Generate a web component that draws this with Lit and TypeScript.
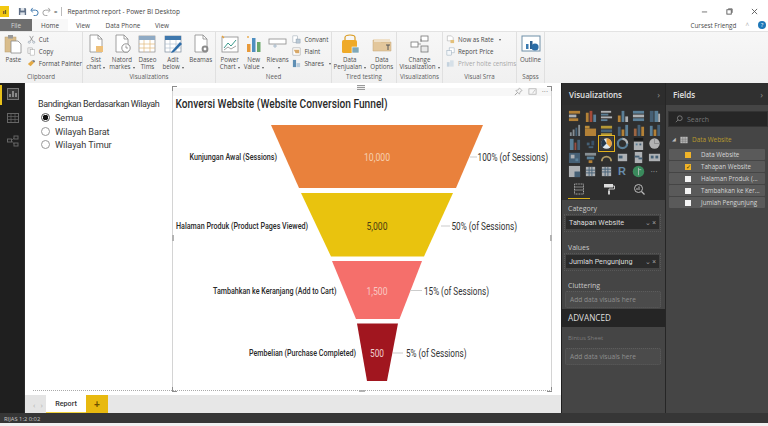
import { LitElement, html, css, svg } from "lit";
import { customElement } from "lit/decorators.js";

const doc = (extra: unknown) => svg`<path d="M4 1h8l4 4v13H4z" fill="#fff" stroke="#8b8b8b" stroke-width=".8"/><path d="M12 1v4h4" fill="none" stroke="#8b8b8b" stroke-width=".8"/>${extra}`;
const ic = (body: unknown, size = 20) => html`<svg class="ic" width=${size} height=${size} viewBox="0 0 20 20">${body}</svg>`;

const icons: Record<string, unknown> = {
  paste: svg`<rect x="2" y="3" width="11" height="15" fill="#d9bd8c" stroke="#b89c6c" stroke-width=".5"/><rect x="5" y="1" width="5" height="3.5" fill="#9a9a9a"/><path d="M8 7h7l3 3v9H8z" fill="#fff" stroke="#8b8b8b" stroke-width=".8"/>`,
  sist: doc(svg`<rect x="10" y="12" width="7" height="6" fill="#eec07a"/>`),
  nat: doc(svg`<circle cx="14" cy="14" r="4.2" fill="#fff" stroke="#777" stroke-width=".8"/><path d="M14 11.5V14h2" fill="none" stroke="#777" stroke-width=".7"/>`),
  table: svg`<rect x="2" y="2" width="16" height="16" fill="#fff" stroke="#8b8b8b" stroke-width=".7"/><rect x="2" y="2" width="16" height="4" fill="#8faac4"/><path d="M2 10h16M2 14h16M7 6v12M13 6v12" stroke="#e3b778" stroke-width=".7"/>`,
  adit: svg`<rect x="2" y="2" width="16" height="16" fill="#fff" stroke="#7b8b9b" stroke-width=".7"/><rect x="2" y="2" width="16" height="4" fill="#3f78ad"/><path d="M2 10h16M2 14h16M7 6v12M13 6v12" stroke="#a9b9c9" stroke-width=".6"/><path d="M9 17l8-9 2 2-8 8-3 1z" fill="#2c6ca8"/>`,
  beam: doc(svg`<circle cx="14" cy="15" r="3.4" fill="#8a8a8a"/><circle cx="14" cy="15" r="1.4" fill="#fff"/>`),
  power: svg`<rect x="2" y="3" width="16" height="15" fill="#fff" stroke="#8b8b8b" stroke-width=".8"/><path d="M4 14l4-5 3 3 5-6" fill="none" stroke="#3b9a8c" stroke-width="1"/><path d="M4 16l4-3 3 2 5-3" fill="none" stroke="#7b7b7b" stroke-width=".7"/><path d="M2 2l2 2" stroke="#e8a23a" stroke-width="1.2"/>`,
  newv: svg`<rect x="3" y="10" width="3.5" height="8" fill="#e89a3a"/><rect x="8" y="4" width="3.5" height="14" fill="#4f8fc0"/><rect x="13" y="8" width="3.5" height="10" fill="#6aa86a"/><path d="M3 3h2M4 2v2" stroke="#e8a23a" stroke-width=".8"/>`,
  riev: svg`<rect x="1" y="5" width="17" height="5" fill="#fff" stroke="#8b8b8b" stroke-width=".8"/><path d="M7 10v4M5 12h4" stroke="#9bb0c4" stroke-width=".8"/>`,
  bag: svg`<path d="M5 6V3.5C5 2 7 1 10 1s5 1 5 2.5V6" fill="none" stroke="#d99a1e" stroke-width="1.2"/><rect x="2" y="6" width="15" height="13" rx="1.5" fill="#efaa28"/><rect x="12" y="13" width="7" height="6" fill="#7fa8b8" stroke="#fff" stroke-width=".6"/>`,
  folder: svg`<path d="M1 6h6l2 2h10v9H1z" fill="#e3c79c" stroke="#c4a577" stroke-width=".5"/><rect x="2" y="5" width="16" height="3" fill="#efe0c8"/><path d="M14 11h4M16 11v5" stroke="#555" stroke-width="1"/>`,
  change: svg`<rect x="1" y="8" width="7" height="5" fill="#fff" stroke="#777" stroke-width=".8"/><rect x="11" y="2" width="7" height="5" fill="#fff" stroke="#777" stroke-width=".8"/><rect x="11" y="12" width="7" height="6" fill="#e9e9e9" stroke="#777" stroke-width=".8"/><path d="M8 10h3M11 5v3" stroke="#777" stroke-width=".7" fill="none"/>`,
  outline: svg`<rect x="1" y="2" width="18" height="15" fill="#fff" stroke="#6f8fa8" stroke-width="1"/><rect x="5" y="10" width="2.5" height="5" fill="#3a7ab0"/><rect x="9" y="7" width="2.5" height="8" fill="#2a5f90"/><circle cx="14" cy="13" r="3.6" fill="#2a6ca6"/>`,
};

const mini: Record<string, unknown> = {
  cut: svg`<path d="M6 2l7 12M14 2L7 14" stroke="#777" stroke-width="1.4"/><circle cx="5" cy="16" r="2.4" fill="none" stroke="#8a9aa8" stroke-width="1.3"/><circle cx="15" cy="16" r="2.4" fill="none" stroke="#8a9aa8" stroke-width="1.3"/>`,
  copy: svg`<rect x="2" y="2" width="10" height="12" fill="#eee" stroke="#999"/><rect x="7" y="6" width="10" height="12" fill="#fff" stroke="#999"/>`,
  fmt: svg`<path d="M2 11l8-7 6 4-8 8z" fill="#e3a945"/><path d="M10 4l6-2 2 4-2 2z" fill="#777"/>`,
  conv: svg`<rect x="2" y="2" width="10" height="14" fill="#fff" stroke="#8b9aa8"/><rect x="9" y="9" width="9" height="9" fill="#b9c9d6" stroke="#8b9aa8"/>`,
  flaint: svg`<rect x="2" y="2" width="16" height="16" fill="#fff" stroke="#8b8b8b"/><path d="M4 6h12v8H8z" fill="#d8a868"/>`,
  shares: svg`<rect x="2" y="2" width="7" height="16" fill="#5f8fb4"/><rect x="10" y="9" width="8" height="9" fill="#b8ccdc"/>`,
  rate: svg`<path d="M3 2h9l4 4v7H3z" fill="#fff" stroke="#999"/><rect x="10" y="11" width="8" height="7" fill="#e3c07a"/>`,
  price: svg`<rect x="7" y="2" width="11" height="11" fill="#fff" stroke="#8ba0b3"/><rect x="2" y="8" width="10" height="10" fill="#f4f7fa" stroke="#8ba0b3"/>`,
  hole: svg`<rect x="2" y="7" width="6" height="10" fill="#c4d2de"/><rect x="9" y="3" width="8" height="14" fill="#d6e0e8"/>`,
};

const miniIcon = (k: string) => html`<svg class="mi" width="9" height="9" viewBox="0 0 20 20">${mini[k]}</svg>`;

const big = (icon: string, l1: string, l2 = "", w = 26, caret = false) => html`
  <div class="big" style="width:${w}px">
    ${ic(icons[icon])}
    <span class="bl">${l1}</span>
    <span class="bl">${l2}${caret ? html`<i class="car"></i>` : ""}</span>
  </div>`;

const small = (icon: string, t: string, caret = false, muted = false) => html`
  <div class="small ${muted ? "muted" : ""}">${miniIcon(icon)}<span>${t}</span>${caret ? html`<i class="car"></i>` : ""}</div>`;

type R = [number, number, number, number, string];
const O = "#e7a13b", B = "#6d9fc0", G = "#a9b4bc", W = "#dfe4e8", D = "#4f7391", Y = "#e8c13a";
const cells: R[][] = [
  [[1, 2, 12, 3, O], [1, 6, 8, 3, W], [1, 10, 10, 3, O]],
  [[2, 4, 3, 10, O], [6, 2, 3, 12, "#d0553c"], [10, 6, 3, 8, B]],
  [[1, 2, 11, 2, W], [1, 5, 8, 2, B], [1, 8, 12, 2, W], [1, 11, 7, 2, B]],
  [[2, 7, 3, 7, O], [6, 2, 3, 12, B], [10, 8, 3, 6, W]],
  [[1, 2, 12, 3, B], [1, 6, 12, 3, W], [1, 10, 12, 3, B]],
  [[2, 2, 4, 12, D], [7, 2, 4, 12, B], [11, 5, 2, 9, W]],
  [[2, 10, 2, 4, G], [5, 7, 2, 7, G], [8, 5, 2, 9, D], [11, 2, 2, 12, G]],
  [[1, 3, 5, 3, "#f0b040"], [1, 6, 12, 8, O]],
  [[1, 3, 12, 3, Y], [1, 7, 12, 3, D], [1, 11, 12, 3, Y]],
  [[2, 4, 3, 10, D], [6, 7, 3, 7, O], [10, 2, 3, 12, B]],
  [[2, 6, 3, 8, "#c87a4a"], [6, 2, 3, 12, D], [10, 4, 3, 10, O]],
  [[2, 3, 3, 11, B], [6, 7, 3, 7, O], [10, 2, 3, 12, D]],
  [[2, 2, 4, 12, B], [7, 6, 2, 8, "#c05a4a"], [10, 3, 3, 11, D]],
  [[3, 6, 3, 3, D], [8, 4, 3, 5, "#3f5f7f"], [5, 10, 5, 2, D]],
  [],
  [],
  [[2, 1, 10, 3, "#111"], [2, 5, 10, 9, W], [4, 7, 2, 2, B], [8, 7, 2, 2, D]],
  [],
  [[1, 2, 12, 11, D], [3, 4, 4, 4, W], [8, 8, 3, 3, B]],
  [[1, 2, 12, 3, G], [3, 6, 8, 3, B], [5, 10, 4, 3, O]],
  [],
  [[2, 3, 10, 8, W], [3, 5, 4, 3, D]],
  [[3, 1, 8, 12, W], [3, 5, 5, 2, D], [7, 7, 4, 2, D]],
  [[1, 3, 12, 8, W], [3, 5, 3, 3, D], [8, 5, 3, 3, D]],
  [[1, 1, 12, 12, W], [7, 7, 6, 6, D]],
  [[2, 2, 10, 10, W], [2, 5, 10, 1, D], [2, 8, 10, 1, D], [5, 2, 1, 10, D], [8, 2, 1, 10, D]],
  [[2, 2, 10, 10, W], [2, 4, 10, 1, D], [2, 7, 10, 1, D], [5, 2, 1, 10, D], [8, 2, 1, 10, D]],
  [],
  [],
  [],
];
const special: Record<number, unknown> = {
  14: svg`<circle cx="7" cy="7" r="5.6" fill="#dfe8ee"/><path d="M7 7V1.4A5.6 5.6 0 0 1 11 11z" fill="#e7a13b"/><path d="M7 7l-4 4A5.6 5.6 0 0 1 4 2z" fill="#24384c"/>`,
  15: svg`<circle cx="7" cy="7" r="5" fill="none" stroke="#6d9fc0" stroke-width="2.4"/><path d="M7 2a5 5 0 0 1 5 5" fill="none" stroke="#e8e8e8" stroke-width="2.4"/>`,
  17: svg`<circle cx="7" cy="7" r="5.6" fill="#e6e6e6"/><path d="M7 2v5h5" stroke="#999" fill="none" stroke-width=".7"/>`,
  20: svg`<path d="M2 11a5 5 0 0 1 10 0" fill="none" stroke="#e0c27a" stroke-width="2"/>`,
};

const vizCell = (i: number) => {
  if (i === 27) return html`<span class="vz r">R</span>`;
  if (i === 28) return html`<svg class="vz" width="13" height="13" viewBox="0 0 14 14"><circle cx="7" cy="7" r="6.2" fill="#3fae6e"/><path d="M7 3v8M7 5h3" stroke="#d6f0e0" stroke-width="1"/></svg>`;
  if (i === 29) return html`<span class="vz dots">···</span>`;
  return html`<svg class="vz ${i === 14 ? "sel" : ""}" width="13" height="13" viewBox="0 0 14 14">${special[i] ?? ""}${cells[i].map((c) => svg`<rect x=${c[0]} y=${c[1]} width=${c[2]} height=${c[3]} fill=${c[4]}/>`)}</svg>`;
};

const seg = (pts: string, fill: string) => svg`<polygon points=${pts} fill=${fill}/>`;
const fit = (x: number, y: number, len: number, t: string, size: number, fill = "#2e2e2e", anchor = "start", weight = 400) =>
  svg`<text x=${x} y=${y} font-size=${size} font-weight=${weight} fill=${fill} text-anchor=${anchor} textLength=${len} lengthAdjust="spacingAndGlyphs">${t}</text>`;

const funnel = [
  { pts: "271,125 483,125 456,188 299,188", fill: "#e9813c", v: "10,000", vc: "#f6cfae", y: 157, vw: 26, vs: 10.5, l: "Kunjungan Awal (Sessions)", lx: 189.5, lw: 87.5, p: "100% (of Sessions)", px: 477.5, pw: 70.5, tx: 470, tw: 7 },
  { pts: "301,193 453,193 424,256.5 331,256.5", fill: "#e9c30e", v: "5,000", vc: "#4c3f12", y: 226, vw: 21, vs: 10.5, l: "Halaman Produk (Product Pages Viewed)", lx: 176, lw: 132, p: "50% (of Sessions)", px: 451.5, pw: 65.5, tx: 441, tw: 9 },
  { pts: "332,261 422,261 399.5,319 356,319", fill: "#f56f6b", v: "1,500", vc: "#f9c7c2", y: 290.5, vw: 21, vs: 10.5, l: "Tambahkan ke Keranjang (Add to Cart)", lx: 213, lw: 123.5, p: "15% (of Sessions)", px: 424, pw: 65, tx: 410, tw: 12 },
  { pts: "357,323.5 398,323.5 387,381 367,381", fill: "#a1161f", v: "500", vc: "#f0cfcf", y: 353, vw: 14, vs: 10.5, l: "Pembelian (Purchase Completed)", lx: 249, lw: 107, p: "5% (of Sessions)", px: 406, pw: 60.5, tx: 393, tw: 10 },
];

@customElement("app-root")
export class AppRoot extends LitElement {
  static styles = css`
    :host { display: block; width: 768px; height: 426px; overflow: hidden; background: #fff; font-family: "Open Sans", "Noto Sans", sans-serif; color: #444; }
    .app { display: flex; flex-direction: column; width: 768px; height: 426px; }

    .title { height: 19px; display: flex; align-items: center; gap: 3px; padding: 4px 0 0 0; background: #fff; font-size: 6.5px; color: #444; flex: none; box-sizing: border-box; }
    .logo { width: 9px; height: 11px; background: #f2c811; color: #333; font: 700 6px "Liberation Sans", sans-serif; display: flex; align-items: center; justify-content: center; margin-right: 6px; }
    .qa { display: flex; align-items: center; gap: 3px; padding-right: 4px; border-right: 1px solid #bbb; margin-right: 2px; }
    .winbtns { margin-left: auto; display: flex; gap: 18px; padding-right: 10px; align-items: center; }

    .tabs { height: 12px; display: flex; align-items: stretch; flex: none; font-size: 6.4px; color: #4a4a4a; position: relative; background: #fff; }
    .tabs > span { display: flex; align-items: center; justify-content: center; }
    .file { width: 32px; background: #6e6e6e; color: #d8d8d8; }
    .home { width: 36px; background: #f8f8f8; color: #444; }
    .tb1 { width: 30px; } .tb2 { width: 50px; } .tb3 { width: 28px; }
    .user { margin-left: auto; display: flex; gap: 9px; align-items: center; padding-right: 2px; font-size: 6.3px; color: #4a4a4a; }
    .help { width: 8px; height: 8px; border-radius: 50%; background: #1e78b8; color: #fff; font-size: 6px; display: flex; align-items: center; justify-content: center; }

    .ribbon { height: 52px; display: flex; flex: none; background: linear-gradient(#f7f7f7, #f0f0f0); border-top: 1px solid #e3e3e3; box-sizing: border-box; }
    .grp { display: flex; flex-direction: column; border-right: 1px solid #e0e0e0; box-sizing: border-box; flex: none; }
    .grp .items { flex: 1; display: flex; justify-content: space-around; padding-top: 2px; }
    .grp .gl { height: 11px; text-align: center; font-size: 6.2px; color: #606060; line-height: 10px; }
    .big { display: flex; flex-direction: column; align-items: center; font-size: 6.2px; line-height: 7.4px; color: #505050; white-space: nowrap; }
    .big .ic { margin-bottom: 2px; }
    .bl { min-height: 7.4px; display: block; }
    .car { display: inline-block; width: 0; height: 0; border: 1.6px solid transparent; border-top: 2px solid #555; border-bottom: 0; margin-left: 2px; vertical-align: middle; }
    .col { display: flex; flex-direction: column; gap: 3px; padding-top: 1px; }
    .small { display: flex; align-items: center; gap: 3px; font-size: 6.2px; line-height: 9px; color: #484848; white-space: nowrap; }
    .muted { color: #a8a8a8; }
    .rest { flex: 1; }

    .main { flex: 1; min-height: 0; display: flex; background: #2b2b2b; }
    .nav { width: 24px; flex: none; background: #1f1f1f; display: flex; flex-direction: column; align-items: center; gap: 11.5px; padding-top: 5px; box-sizing: border-box; border-left: 2px solid transparent; position: relative; margin-right: 1px; }
    .nav::before { content: ""; position: absolute; left: -2px; top: 2px; width: 2px; height: 20px; background: #e8c11a; }

    .center { width: 536px; flex: none; display: flex; flex-direction: column; }
    .report { flex: 1; min-height: 0; background: #fff; display: flex; position: relative; }
    .slicer { width: 147px; flex: none; box-sizing: border-box; padding: 15px 0 0 13px; }
    .sl-title { font: 9px/12px Roboto, sans-serif; letter-spacing: -0.4px; color: #333; white-space: nowrap; margin-bottom: 1px; }
    .radio { display: flex; align-items: center; gap: 5px; height: 13.4px; padding-left: 3px; font: 9.2px Roboto, sans-serif; letter-spacing: -0.1px; color: #3a3a3a; }
    .dot { width: 7px; height: 7px; border-radius: 50%; border: 1px solid #999; background: #fff; flex: none; }
    .dot.on { border-color: #555; background: radial-gradient(circle, #111 0 2.6px, #fff 3px); }
    .visual { width: 380px; flex: none; height: 303px; margin-top: 5px; border-left: 1px solid #d4d4d4; border-right: 1px solid #d4d4d4; box-sizing: border-box; position: relative; background: linear-gradient(#f7f7f7 0 8px, #fff 8px); }
    .visual svg.chart { display: block; font-family: Roboto, sans-serif; }
    .hicons { position: absolute; right: 3px; top: -1px; display: flex; gap: 5px; align-items: center; height: 8px; }
    .grip { position: absolute; background: #b3b3b3; }
    .corner { position: absolute; width: 4px; height: 4px; border: 0 solid #8c8c8c; }
    .dotline { position: absolute; left: 8px; width: 519px; top: 307px; border-top: 1px dotted #aaa; }

    .tabbar { height: 18px; flex: none; background: #e7e7e7; display: flex; align-items: stretch; }
    .arrows { width: 21px; display: flex; gap: 5px; align-items: center; justify-content: center; padding-left: 5px; box-sizing: border-box; color: #b5b5b5; font-size: 8px; background: #e4e4e4; }
    .rep { width: 40px; background: #fff; border-bottom: 1px solid #f2d33c; font: 500 7.2px Roboto, sans-serif; color: #333; display: flex; align-items: center; justify-content: center; box-sizing: border-box; }
    .plus { width: 22px; background: #e8b90f; color: #6b4f00; font: 700 10px "Liberation Sans", sans-serif; display: flex; align-items: center; justify-content: center; }

    .panel { background: #454545; display: flex; flex-direction: column; box-sizing: border-box; flex: none; }
    .vizp { width: 104px; border-left: 1px solid #1f1f1f; }
    .fldp { width: 103px; border-left: 1px solid #262626; }
    .ph { height: 22px; flex: none; background: #2d2d2d; display: flex; align-items: center; justify-content: space-between; padding: 0 5px 0 7px; font: 600 8px "Open Sans", sans-serif; color: #e2e2e2; }
    .ph i { font-style: normal; font-size: 9px; color: #8a8a8a; font-weight: 400; }
    .vgrid { height: 78px; flex: none; background: #2f2f2f; display: grid; grid-template-columns: repeat(6, 16px); grid-auto-rows: 14px; padding: 3px 0 0 4px; box-sizing: border-box; justify-items: center; align-items: center; }
    .vz { display: block; opacity: .72; }
    .vz.sel { outline: 1px solid #e3b21c; outline-offset: 1px; background: #3a3a3a; opacity: 1; }
    .r { color: #7fb0d8; font: 700 11px "Liberation Sans", sans-serif; }
    .dots { color: #bbb; font-size: 9px; letter-spacing: 0; }
    .wtabs { height: 17px; flex: none; background: #2f2f2f; display: flex; gap: 8px; padding-left: 6px; align-items: flex-start; }
    .wt { width: 22px; height: 16px; display: flex; justify-content: center; box-sizing: border-box; }
    .wt.on { border-bottom: 1px solid #d7b01c; }
    .body { flex: 1; min-height: 0; display: flex; flex-direction: column; font-size: 7px; color: #ccc; }
    .lab { padding: 4px 0 0 6px; height: 13px; line-height: 10px; box-sizing: border-box; font-size: 7px; color: #c9c9c9; }
    .well { margin: 1px 4px 0 2px; border: 1px dotted #585858; padding: 1px; height: 18px; box-sizing: border-box; }
    .chip { height: 13px; background: #2b2b2b; display: flex; align-items: center; justify-content: space-between; padding: 0 3px; font: 7.2px Roboto, sans-serif; color: #dcdcdc; white-space: nowrap; }
    .chip b { font-weight: 400; color: #9a9a9a; font-size: 7px; }
    .empty { margin: 1px 4px 0 3px; height: 17px; border: 1px dotted #5c5c5c; border-radius: 2px; background: #4b4b4b; color: #8f8f8f; padding-left: 4px; font-size: 6.6px; line-height: 15px; box-sizing: border-box; }
    .gap { height: 10px; flex: none; }
    .adv { margin-top: 1px; height: 18px; background: #252525; color: #dfdfdf; font-size: 8.2px; line-height: 18px; padding-left: 6px; flex: none; }
    .lab2 { padding: 7px 0 5px 6px; font-size: 6px; color: #7d7d7d; line-height: 8px; }

    .search { margin: 6px 0 0 2px; height: 16px; background: #262626; border: 1px solid #333; display: flex; align-items: center; gap: 4px; padding-left: 6px; box-sizing: border-box; font-size: 7px; color: #777; }
    .tree { display: flex; align-items: center; gap: 4px; padding: 8px 0 5px 6px; font-size: 6.4px; color: #b79a2d; line-height: 9px; }
    .rows { display: flex; flex-direction: column; gap: 1px; padding: 0 3px 0 3px; }
    .row { height: 11px; background: #5a5a5a; display: flex; align-items: center; font-size: 6.2px; color: #d6d6d6; white-space: nowrap; overflow: hidden; border-radius: 1px; }
    .cb { width: 6px; height: 6px; background: #f4f4f4; flex: none; margin: 0 10px 0 16px; color: #3a3000; font-size: 6px; line-height: 6px; text-align: center; }
    .cb.y { background: #f0b429; }

    .status { height: 10px; flex: none; background: #363636; color: #c4c4c4; font: 5.8px/13px "Open Sans", sans-serif; padding-left: 4px; overflow: hidden; }
    .foot { height: 3px; flex: none; background: #f0f0f0; }
  `;

  render() {
    return html`<div class="app">
      <div class="title">
        <div class="logo">ıl</div>
        <div class="qa">
          <svg width="9" height="9" viewBox="0 0 10 10"><path d="M1 1h7l1 1v7H1z" fill="#5f6f86"/><rect x="3" y="1" width="4" height="3" fill="#dfe4ea"/><rect x="2.5" y="6" width="5" height="3" fill="#dfe4ea"/></svg>
          <svg width="9" height="9" viewBox="0 0 10 10"><path d="M3 1L1 3.5 3 6M1.5 3.5H6a3 3 0 0 1 0 6H4" fill="none" stroke="#3f78ad" stroke-width="1.1"/></svg>
          <svg width="9" height="9" viewBox="0 0 10 10"><path d="M7 1l2 2.5L7 6M8.5 3.5H4a3 3 0 0 0 0 6h2" fill="none" stroke="#999" stroke-width="1"/></svg>
          <span style="font-size:6px">=</span>
        </div>
        <span>Repartmot report - Power BI Desktop</span>
        <div class="winbtns">
          <svg width="7" height="7" viewBox="0 0 8 8"><path d="M1 4.5h6" stroke="#666" stroke-width="1"/></svg>
          <svg width="7" height="7" viewBox="0 0 8 8"><rect x="1" y="2" width="5" height="5" fill="none" stroke="#555" stroke-width="1"/><path d="M2.5 1H7v4.5" fill="none" stroke="#555" stroke-width="1"/></svg>
          <svg width="7" height="7" viewBox="0 0 8 8"><path d="M1 1l6 6M7 1L1 7" stroke="#555" stroke-width="1"/></svg>
        </div>
      </div>
      <div class="tabs">
        <span class="file">File</span><span class="home">Home</span><span class="tb1">View</span><span class="tb2">Data Phone</span><span class="tb3">View</span>
        <div class="user"><span>Cursest Friengd</span><span style="color:#aaa">^</span><span class="help">?</span></div>
      </div>
      <div class="ribbon">
        <div class="grp" style="width:83px"><div class="items" style="justify-content:flex-start;gap:2px;padding-left:2px">
          ${big("paste", "Paste", "", 24)}
          <div class="col">${small("cut", "Cut")}${small("copy", "Copy")}${small("fmt", "Format Painter")}</div>
        </div><div class="gl">Clipboard</div></div>
        <div class="grp" style="width:133px"><div class="items">
          ${big("sist", "Sist", "chart", 25, true)}${big("nat", "Natord", "markes", 26, true)}${big("table", "Daseo", "Tims", 24)}${big("adit", "Adit", "below", 26, true)}${big("beam", "Beamas", "", 28)}
        </div><div class="gl">Visualizations</div></div>
        <div class="grp" style="width:116px"><div class="items" style="justify-content:flex-start;padding-left:2px">
          ${big("power", "Power", "Chart", 24, true)}${big("newv", "New", "Value", 25, true)}${big("riev", "Rievans", "", 24, true)}
          <div class="col" style="margin-left:3px">${small("conv", "Convant")}${small("flaint", "Flaint")}${small("shares", "Shares", true)}</div>
        </div><div class="gl">Need</div></div>
        <div class="grp" style="width:65px"><div class="items">
          ${big("bag", "Data", "Penjualan", 33, true)}${big("folder", "Data", "Options", 26)}
        </div><div class="gl">Tired testing</div></div>
        <div class="grp" style="width:46px"><div class="items">
          ${big("change", "Change", "Visualization", 42, true)}
        </div><div class="gl">Visualizations</div></div>
        <div class="grp" style="width:74px"><div class="items" style="justify-content:flex-start;padding-left:3px">
          <div class="col">${small("rate", "Now as Rate", true)}${small("price", "Report Price")}${small("hole", "Priver holte censims", false, true)}</div>
        </div><div class="gl">Visual Srra</div></div>
        <div class="grp" style="width:28px"><div class="items">${big("outline", "Outline", "", 26)}</div><div class="gl">Sapss</div></div>
        <div class="rest"></div>
      </div>

      <div class="main">
        <div class="nav">
          <svg width="12" height="12" viewBox="0 0 12 12"><rect x=".5" y=".5" width="11" height="11" fill="#3a3a3a" stroke="#777"/><path d="M3 9V6M6 9V3M9 9V5" stroke="#aaa" stroke-width="1.4"/></svg>
          <svg width="12" height="12" viewBox="0 0 12 12"><rect x=".5" y="1.5" width="11" height="9" fill="none" stroke="#666"/><path d="M.5 4.5h11M.5 7.5h11M4 1.5v9M8 1.5v9" stroke="#666" stroke-width=".7"/></svg>
          <svg width="12" height="12" viewBox="0 0 12 12"><rect x=".5" y="4" width="4" height="3" fill="none" stroke="#666"/><rect x="7" y="1" width="4" height="3" fill="none" stroke="#666"/><rect x="7" y="8" width="4" height="3" fill="none" stroke="#666"/><path d="M4.5 5.5L7 3M4.5 5.5L7 9" stroke="#666" stroke-width=".7"/></svg>
        </div>
        <div class="center">
          <div class="report">
            <div class="slicer">
              <div class="sl-title">Bandingkan Berdasarkan Wilayah</div>
              <div class="radio"><span class="dot on"></span>Semua</div>
              <div class="radio"><span class="dot"></span>Wilayah Barat</div>
              <div class="radio"><span class="dot"></span>Wilayah Timur</div>
            </div>
            <div class="visual">
              <svg class="chart" width="378" height="303" viewBox="173 88 378 303">
                ${fit(175.5, 108, 212, "Konversi Website (Website Conversion Funnel)", 13, "#2a2a2a", "start", 500)}
                ${funnel.map((f) => svg`
                  ${seg(f.pts, f.fill)}
                  ${fit(377, f.y + 4, f.vw, f.v, f.vs, f.vc, "middle")}
                  ${fit(f.lx, f.y + 3, f.lw, f.l, 9.4, "#2a2a2a", "start", 500)}
                  ${fit(f.px, f.y + 4, f.pw, f.p, 10.8, "#333")}
                  <rect x=${f.tx} y=${f.y - 0.5} width=${f.tw} height="1" fill="#ccc"/>
                `)}
              </svg>
              <div class="hicons">
                <svg width="9" height="9" viewBox="0 0 10 10"><path d="M6 1l3 3-2 1-1 3-2-2-3 3 3-3-2-2 3-1z" fill="none" stroke="#999" stroke-width=".7"/></svg>
                <svg width="9" height="9" viewBox="0 0 10 10"><rect x="1" y="2" width="8" height="6" fill="none" stroke="#aaa" stroke-width=".8"/><path d="M5 7l3-4" stroke="#aaa" stroke-width=".7"/></svg>
                <span style="font-size:8px;line-height:6px;color:#777;letter-spacing:0">···</span>
              </div>
              <span class="grip" style="left:184px;top:-3px;width:8px;height:5px;background:repeating-linear-gradient(#999 0 1px,#eee 1px 2px)"></span>
              <span class="grip" style="left:-1px;top:147px;width:2px;height:6px"></span>
              <span class="grip" style="right:-1px;top:147px;width:2px;height:6px"></span>
              <span class="grip" style="left:186px;bottom:-1px;width:6px;height:2px"></span>
              <span class="corner" style="left:-1px;top:-2px;border-width:1.5px 0 0 1.5px"></span>
              <span class="corner" style="right:-1px;top:-2px;border-width:1.5px 1.5px 0 0"></span>
              <span class="corner" style="left:-1px;bottom:-1px;border-width:0 0 1.5px 1.5px"></span>
              <span class="corner" style="right:-1px;bottom:-1px;border-width:0 1.5px 1.5px 0"></span>
            </div>
            <div class="dotline"></div>
          </div>
          <div class="tabbar">
            <div class="arrows"><span>‹</span><span>›</span></div>
            <div class="rep">Report</div>
            <div class="plus">+</div>
          </div>
        </div>
        <div class="panel vizp">
          <div class="ph"><span>Visualizations</span><i>›</i></div>
          <div class="vgrid">${Array.from({ length: 30 }, (_, i) => vizCell(i))}</div>
          <div class="wtabs">
            <div class="wt on"><svg width="12" height="12" viewBox="0 0 12 12"><rect x="1.5" y="1" width="9" height="10" fill="none" stroke="#aaa" stroke-dasharray="1 .6"/><path d="M1.5 4h9M1.5 7h9" stroke="#aaa" stroke-width=".7"/></svg></div>
            <div class="wt"><svg width="12" height="12" viewBox="0 0 12 12"><rect x="1" y="1" width="9" height="3.5" fill="#ddd"/><path d="M10 3h1.5v3H6v1.5" fill="none" stroke="#ccc"/><rect x="5" y="7.5" width="2" height="4" fill="#ccc"/></svg></div>
            <div class="wt"><svg width="12" height="12" viewBox="0 0 12 12"><circle cx="5.5" cy="5.5" r="4" fill="none" stroke="#bbb"/><path d="M8.5 8.5l3 3" stroke="#bbb" stroke-width="1.2"/><path d="M4 7V5M6 7V3.5" stroke="#bbb"/></svg></div>
          </div>
          <div class="body">
            <div class="lab">Category</div>
            <div class="well"><div class="chip"><span>Tahapan Website</span><b>⌄ ×</b></div></div>
            <div class="gap" style="height:7px"></div>
            <div class="lab">Values</div>
            <div class="well"><div class="chip"><span>Jumlah Pengunjung</span><b>⌄ ×</b></div></div>
            <div class="gap" style="height:6px"></div>
            <div class="lab">Cluttering</div>
            <div class="empty">Add data visuals here</div>
            <div class="adv">ADVANCED</div>
            <div class="lab2">Bintus Sheet</div>
            <div class="empty">Add data visuals here</div>
          </div>
        </div>
        <div class="panel fldp">
          <div class="ph" style="background:#303030"><span>Fields</span><i>›</i></div>
          <div class="search">
            <svg width="8" height="8" viewBox="0 0 10 10"><circle cx="6" cy="4" r="3" fill="none" stroke="#888"/><path d="M4 6L1 9" stroke="#888"/></svg>
            <span>Search</span>
          </div>
          <div class="tree">
            <span style="font-size:5px;color:#bbb">◢</span>
            <svg width="8" height="8" viewBox="0 0 10 10"><rect x=".5" y="1" width="9" height="8" fill="#bbb"/><path d="M.5 4h9M.5 6.5h9M3.5 1v8M6.5 1v8" stroke="#666" stroke-width=".6"/></svg>
            <span>Data Website</span>
          </div>
          <div class="rows">
            <div class="row"><span class="cb y"></span>Data Website</div>
            <div class="row"><span class="cb y">✓</span>Tahapan Website</div>
            <div class="row"><span class="cb"></span>Halaman Produk (...</div>
            <div class="row"><span class="cb"></span>Tambahkan ke Ker...</div>
            <div class="row"><span class="cb"></span>Jumlah Pengunjung</div>
          </div>
        </div>
      </div>
      <div class="status">RIJAS 1:2 0:02</div>
      <div class="foot"></div>
    </div>`;
  }
}
